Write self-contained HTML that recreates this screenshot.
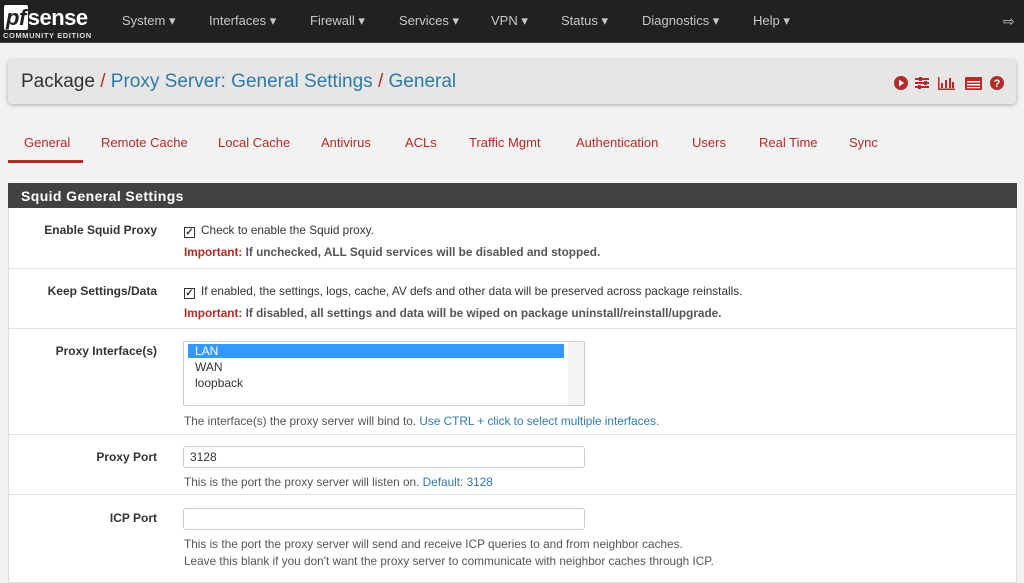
<!DOCTYPE html>
<html><head><meta charset="utf-8"><style>
*{margin:0;padding:0;box-sizing:border-box}
body{width:1024px;height:573px;overflow:hidden;background:#f2f2f2;font-family:"Liberation Sans",sans-serif;position:relative;font-size:12px;color:#333}
.a{position:absolute;white-space:nowrap}
.nav{position:absolute;left:0;top:0;width:1024px;height:43px;background:#212121;border-bottom:1px solid #444}
.nav .m{position:absolute;top:13px;color:#c8c8c8;font-size:13px}
.crumb{position:absolute;left:8px;top:60px;width:1008px;height:44px;background:#e6e6e6;border-radius:4px;box-shadow:0 1px 4px rgba(0,0,0,.3)}
.tab{position:absolute;top:135px;color:#b52b27;font-size:13px}
.panel{position:absolute;left:8px;top:183px;width:1009px;height:400px;background:#fff;border:1px solid #ddd}
.ph{position:absolute;left:8px;top:183px;width:1009px;height:25px;background:#424242;color:#fff;font-weight:bold;font-size:14px;padding:5px 13px;letter-spacing:.4px}
.lbl{position:absolute;font-weight:bold;font-size:12px;color:#333;text-align:right;width:148px;left:9px}
.line{position:absolute;left:9px;width:1007px;height:1px;background:#e3e3e3}
.help{position:absolute;left:184px;font-size:11.8px;color:#555}
.blue{color:#317aa4}
.red{color:#b52b27;font-weight:bold}
.cb{display:inline-block;width:11px;height:11px;border:1px solid #333;vertical-align:-1px;margin-right:6px;font-size:10px;line-height:9px;text-align:center;font-weight:bold}
.inp{position:absolute;left:183px;width:402px;height:22px;border:1px solid #ccc;border-radius:3px;background:#fff;padding:3px 6px;font-size:12px}
</style></head><body>
<div class="nav">
<div class="a" style="left:4px;top:5px;font-size:22px;font-weight:bold;color:#fff;letter-spacing:-.5px"><span style="background:#fff;color:#212121;font-style:italic;padding:0 2px;border-radius:2px">pf</span>sense</div>
<div class="a" style="left:3px;top:31px;font-size:7.5px;font-weight:bold;color:#ddd;letter-spacing:.6px">COMMUNITY EDITION</div>
<span class="m a" style="left:122px">System ▾</span>
<span class="m a" style="left:209px">Interfaces ▾</span>
<span class="m a" style="left:310px">Firewall ▾</span>
<span class="m a" style="left:399px">Services ▾</span>
<span class="m a" style="left:491px">VPN ▾</span>
<span class="m a" style="left:561px">Status ▾</span>
<span class="m a" style="left:642px">Diagnostics ▾</span>
<span class="m a" style="left:753px">Help ▾</span>
<span class="m a" style="left:1003px;font-size:14px">⇨</span>
</div>
<div class="crumb"></div>
<div class="a" style="left:21px;top:71px;font-size:19px;color:#333">Package<span style="color:#b52b27"> / </span><span style="color:#317aa4"> Proxy Server: General Settings</span><span style="color:#b52b27"> / </span><span style="color:#317aa4"> General</span></div>
<svg class="a" style="left:893px;top:75px" width="115" height="16">
<circle cx="8" cy="8" r="7" fill="#b52b27"/><path d="M6 4.5L11 8 6 11.5Z" fill="#fff"/>
<g stroke="#b52b27" stroke-width="2"><line x1="22" y1="4" x2="36" y2="4"/><line x1="22" y1="8" x2="36" y2="8"/><line x1="22" y1="12" x2="36" y2="12"/></g>
<g fill="#b52b27"><rect x="26" y="2" width="3" height="4"/><rect x="31" y="6" width="3" height="4"/><rect x="25" y="10" width="3" height="4"/>
<rect x="45" y="2" width="1.5" height="13"/><rect x="45" y="13.5" width="17" height="1.5"/><rect x="48" y="8" width="2" height="5"/><rect x="52" y="5" width="2" height="8"/><rect x="56" y="3" width="2" height="10"/><rect x="59" y="7" width="2" height="6"/>
<rect x="72" y="2" width="17" height="13" rx="1"/></g>
<g fill="#fff"><rect x="74" y="6" width="13" height="1.5"/><rect x="74" y="9" width="13" height="1.5"/><rect x="74" y="12" width="13" height="1.2"/></g>
<circle cx="104" cy="8" r="7" fill="#b52b27"/><text x="104" y="12" font-size="11" font-weight="bold" fill="#fff" text-anchor="middle" font-family="Liberation Sans">?</text>
</svg>
<span class="tab a" style="left:24px">General</span>
<div class="a" style="left:8px;top:160px;width:75px;height:3px;background:#b52b27"></div>
<span class="tab a" style="left:101px">Remote Cache</span>
<span class="tab a" style="left:218px">Local Cache</span>
<span class="tab a" style="left:321px">Antivirus</span>
<span class="tab a" style="left:405px">ACLs</span>
<span class="tab a" style="left:469px">Traffic Mgmt</span>
<span class="tab a" style="left:576px">Authentication</span>
<span class="tab a" style="left:692px">Users</span>
<span class="tab a" style="left:759px">Real Time</span>
<span class="tab a" style="left:849px">Sync</span>
<div class="panel"></div>
<div class="ph">Squid General Settings</div>
<div class="lbl a" style="top:223px">Enable Squid Proxy</div>
<div class="help a" style="top:223px;color:#333"><span class="cb">✓</span>Check to enable the Squid proxy.</div>
<div class="help a" style="top:245px"><span class="red">Important:</span> <b>If unchecked, ALL Squid services will be disabled and stopped.</b></div>
<div class="line" style="top:268px"></div>
<div class="lbl a" style="top:284px">Keep Settings/Data</div>
<div class="help a" style="top:284px;color:#333"><span class="cb">✓</span>If enabled, the settings, logs, cache, AV defs and other data will be preserved across package reinstalls.</div>
<div class="help a" style="top:306px"><span class="red">Important:</span> <b>If disabled, all settings and data will be wiped on package uninstall/reinstall/upgrade.</b></div>
<div class="line" style="top:328px"></div>
<div class="lbl a" style="top:344px">Proxy Interface(s)</div>
<div class="a" style="left:183px;top:341px;width:402px;height:65px;border:1px solid #ccc;border-radius:2px;background:#fff">
<div style="position:absolute;left:4px;top:2px;width:376px;height:14px;background:#3399ff"></div>
<div class="a" style="left:11px;top:2px;color:#fff">LAN</div>
<div class="a" style="left:11px;top:18px">WAN</div>
<div class="a" style="left:11px;top:34px">loopback</div>
<div class="a" style="left:384px;top:0;width:16px;height:63px;background:#f3f3f3"></div>
</div>
<div class="help a" style="top:414px">The interface(s) the proxy server will bind to. <span class="blue">Use CTRL + click to select multiple interfaces.</span></div>
<div class="line" style="top:434px"></div>
<div class="lbl a" style="top:450px">Proxy Port</div>
<div class="inp" style="top:446px">3128</div>
<div class="help a" style="top:475px">This is the port the proxy server will listen on. <span class="blue">Default: 3128</span></div>
<div class="line" style="top:494px"></div>
<div class="lbl a" style="top:511px">ICP Port</div>
<div class="inp" style="top:508px"></div>
<div class="help a" style="top:537px">This is the port the proxy server will send and receive ICP queries to and from neighbor caches.</div>
<div class="help a" style="top:554px">Leave this blank if you don't want the proxy server to communicate with neighbor caches through ICP.</div>
</body></html>
